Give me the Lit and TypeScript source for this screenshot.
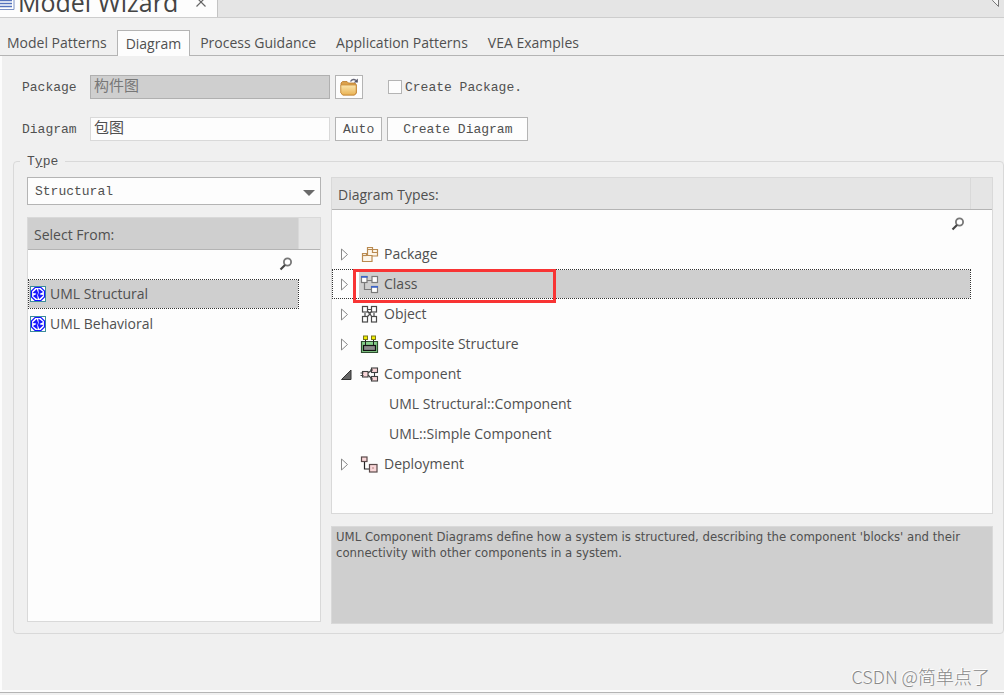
import { LitElement, html, css, svg, nothing } from "lit";
import { customElement, state } from "lit/decorators.js";
import { classMap } from "lit/directives/class-map.js";

const TABS = ["Model Patterns", "Diagram", "Process Guidance", "Application Patterns", "VEA Examples"];

interface TreeNode {
  name: string;
  icon: keyof typeof ICONS;
  children?: string[];
}

const ICONS = {
  package: svg`<g fill="#fdf6ea" stroke="#b98a50" stroke-width="1.2">
    <path d="M7.500 2.500h5v2h5v6.500h-10z"/><path d="M7.500 4.500h5v3h5"/>
    <path d="M2.500 8.500h4v2h5.500v6h-9.500z"/><path d="M2.500 10.500h4"/></g>`,
  class: svg`<g fill="none" stroke="#7a7a7a" stroke-width="1.200">
    <path d="M7 5.500h5M4.500 8v6.500h7"/>
    <rect x="1.500" y="1.500" width="5.500" height="6" fill="#fff"/>
    <rect x="12" y="1.500" width="5.500" height="6" fill="#fff"/>
    <rect x="11.500" y="11.500" width="6" height="6" fill="#fff"/></g>
    <path d="M1 1.800h6.600M11 11.800h7" stroke="#3c64c8" stroke-width="1.800"/>`,
  object: svg`<g fill="#fff" stroke="#4a4a4a" stroke-width="1.200">
    <path d="M7 4.500h5M5 8v4M14 8v4M8 8h3M7 6l3 2 2-2M7 12l3-3 2 3" fill="none"/>
    <rect x="2.500" y="1.500" width="5" height="5.500"/><rect x="11.500" y="1.500" width="5" height="5.500"/>
    <rect x="2.500" y="11.500" width="5" height="5.500"/><rect x="11.500" y="11.500" width="5" height="5.500"/></g>`,
  composite: svg`<path d="M1.500 6.500h16v11h-16z" fill="#86cf8a" stroke="#2f4f30" stroke-width="1.200"/>
    <path d="M5.500 4v6M13.500 4v6" stroke="#222"/>
    <rect x="3.500" y="1" width="4" height="3.500" fill="#f2ee00" stroke="#77751a"/>
    <rect x="11.500" y="1" width="4" height="3.500" fill="#f2ee00" stroke="#77751a"/>
    <rect x="3.500" y="10.500" width="12" height="5" fill="#8b8b8b" stroke="#111" stroke-width="1.200"/>`,
  component: svg`<g fill="#f9d6d8" stroke="#3f3f3f" stroke-width="1.100">
    <path d="M8 8l4-3M8 10l4 4M14.500 8v3" fill="none"/>
    <rect x="2.500" y="6.500" width="5.500" height="5.500"/><rect x="11.500" y="3" width="6" height="4.500"/>
    <rect x="11.500" y="11.500" width="6" height="4.500"/>
    <path d="M.5 8h3M.5 10.500h3M10 5h3M10 14h3"/></g>`,
  deployment: svg`<g fill="#f9d6d8" stroke="#5a4a4a" stroke-width="1.200">
    <path d="M4.500 7v7h5" fill="none" stroke="#222"/>
    <rect x="1.500" y="2" width="5.500" height="4.500"/><rect x="9.500" y="9.500" width="7.500" height="7.500"/></g>
    <path d="M12 13h2" stroke="#b08080"/>`,
};

const TREE: TreeNode[] = [
  { name: "Package", icon: "package" },
  { name: "Class", icon: "class" },
  { name: "Object", icon: "object" },
  { name: "Composite Structure", icon: "composite" },
  { name: "Component", icon: "component", children: ["UML Structural::Component", "UML::Simple Component"] },
  { name: "Deployment", icon: "deployment" },
];

const magnifier = html`<svg class="magnifier" viewBox="0 0 14 14" aria-hidden="true">
  <circle cx="8.500" cy="5" r="3.600" fill="#fff" stroke="#777" stroke-width="1.800"/>
  <path d="M6 8L1.500 12.500" stroke="#444" stroke-width="2.200"/></svg>`;

const umlIcon = html`<svg class="uml" viewBox="0 0 16 16" aria-hidden="true">
  <rect x=".5" y=".5" width="15" height="15" fill="#fff" stroke="#3c8c9c"/>
  <path d="M5 1.500h6L14.500 5v6L11 14.500H5L1.500 11V5z" fill="#fff" stroke="#1414ff" stroke-width="1.200"/>
  <path d="M4 6.500L6.500 4l1 3zM9 3.800l3 2.200-2.600 1.400zM12 9.500L9.500 12l-1-3zM7 12.200L4 10l2.600-1.400z" fill="#1414ff" stroke="#1414ff" stroke-width="1.200"/>
  <path d="M6 7.500l4 1" stroke="#1414ff"/></svg>`;

@customElement("app-root")
export class AppRoot extends LitElement {
  @state() private tab = "Diagram";
  @state() private source = "UML Structural";
  @state() private selected = "Class";
  @state() private open = new Set(["Component"]);

  static styles = css`
    :host {
      --ui: "Open Sans", "Noto Sans", sans-serif;
      --mono: "Liberation Mono", "Noto Sans CJK SC", monospace;
      --line: #b4b4b4;
      --soft: #d9d9d9;
      --grey: #cfcfcf;
      display: flex;
      flex-direction: column;
      min-height: 100vh;
      box-sizing: border-box;
      background: #f0f0f0;
      color: #505050;
      font: 14px/20px var(--ui);
    }
    *, *::before { box-sizing: border-box; }
    button, input, select { font: inherit; color: inherit; margin: 0; border-radius: 0; }
    button { padding: 0; border: 0; background: none; text-align: left; }
    ul { list-style: none; margin: 0; padding: 0; }

    .titlebar {
      display: flex;
      align-items: flex-end;
      justify-content: space-between;
      height: 18px;
      overflow: hidden;
      background: #e5e5e5;
      border-bottom: 1px solid #cdcdcd;
    }
    .doc {
      display: flex;
      align-items: flex-end;
      width: 218px;
      height: 40px;
      flex: none;
      margin-bottom: -1px;
      background: #fdfdfd;
      border-right: 1px solid #c4c4c4;
    }
    .doc-icon { width: 15px; height: 20px; margin-bottom: 8px; }
    .doc h1 { margin: 0 0 0 3px; font: 25px/32px var(--ui); color: #444; white-space: nowrap; }
    .close { margin: 0 0 10px auto; padding-right: 10px; line-height: 0; }
    .close svg { width: 12px; height: 12px; }
    .scroll { width: 10px; height: 20px; margin: 0 4px 10px 0; }

    .tabs {
      display: flex;
      height: 38px;
      padding-top: 12px;
      border-bottom: 1px solid var(--line);
    }
    .tab { height: 26px; padding: 0 9px 1px; white-space: nowrap; border: 1px solid transparent; border-bottom: 0; }
    .tab.active { background: #fdfdfd; border-color: var(--line); padding: 1px 8px 0; }
    .tab:first-child { padding-left: 6px; }

    .page {
      flex: 1;
      display: flex;
      flex-direction: column;
      padding: 19px 0 0 11px;
      border-left: 2px solid #fcfcfc;
      border-bottom: 2px solid #fcfcfc;
    }
    .fields {
      display: grid;
      grid-template-columns: 63px 240px auto;
      grid-auto-rows: 24px;
      column-gap: 5px;
      row-gap: 18px;
      justify-content: start;
      padding-left: 9px;
      font: 13px/26px var(--mono);
    }
    .field {
      height: 24px;
      padding: 0 3px 6px;
      border: 1px solid var(--soft);
      background: #fdfdfd;
      font: 15px/16px "Noto Sans CJK SC", sans-serif;
    }
    .field:disabled { background: var(--grey); border-color: #b0b0b0; color: #777; }
    .actions { display: flex; gap: 5px; }
    .btn {
      height: 24px;
      padding: 2px 15px 0;
      border: 1px solid var(--line);
      background: #fdfdfd;
      text-align: center;
      line-height: 20px;
    }
    .btn.small { padding: 2px 7px 0; }
    .btn.folder { padding: 0 4px; line-height: 0; }
    .btn svg { width: 18px; height: 18px; }
    .check { display: flex; align-items: center; gap: 3px; margin-left: 20px; }
    .check span { padding-top: 2px; }
    .check input {
      appearance: none;
      width: 14px;
      height: 14px;
      border: 1px solid var(--line);
      background: #fdfdfd;
    }
    .check input:checked { background: #555; }

    fieldset {
      margin: 10px 0 0;
      padding: 6px 10px 9px 6px;
      min-width: 0;
      border: 1px solid var(--soft);
      border-radius: 4px;
    }
    legend { padding: 2px 7px 0; font: 13px/18px var(--mono); }
    .columns {
      display: grid;
      grid-template-columns: 294px minmax(0, 1fr);
      gap: 10px;
      margin-left: 7px;
    }
    .column { display: flex; flex-direction: column; gap: 12px; }
    .column:first-child { padding-bottom: 2px; }
    .drop { position: relative; display: flex; }
    .drop select {
      flex: 1;
      height: 28px;
      padding: 2px 7px 0;
      appearance: none;
      border: 1px solid var(--line);
      background: #fdfdfd;
      font: 13px/24px var(--mono);
    }
    .drop svg { position: absolute; right: 6px; top: 13px; width: 12px; height: 6px; pointer-events: none; }

    .panel {
      flex: 1;
      display: flex;
      flex-direction: column;
      border: 1px solid var(--soft);
      background: #fdfdfd;
    }
    .tree { padding-bottom: 34px; }
    .head {
      display: grid;
      grid-template: 31px / 1fr 21px;
      height: 32px;
      border-bottom: 1px solid var(--line);
      background: #e5e5e5;
      line-height: 34px;
    }
    .head h2 { margin: 0; padding-left: 6px; font: inherit; border-right: 1px solid var(--soft); }
    .head.picked h2 { background: var(--grey); }
    .search { display: flex; align-items: center; height: 29px; padding: 0 27px 2px 0; }
    .search input { flex: 1; min-width: 0; height: 24px; border: 0; background: transparent; outline: 0; }
    .magnifier { width: 14px; height: 14px; }

    .row {
      position: relative;
      display: flex;
      align-items: center;
      height: 30px;
      margin-right: 21px;
      border: 1px solid transparent;
    }
    .row.selected { border: 1px dotted #333; }
    .source { width: 100%; height: 28px; display: flex; align-items: center; gap: 4px; padding-left: 1px; }
    .uml { width: 16px; height: 16px; }
    .selected .source, .selected .node { background: var(--grey); }
    .twist { width: 26px; height: 28px; padding-left: 6px; line-height: 0; }
    .twist svg { width: 13px; height: 15px; }
    .node { flex: 1; display: flex; align-items: center; gap: 4px; height: 28px; }
    .node svg { width: 20px; height: 20px; margin: 2px 0 0 1px; }
    .leaf { padding-left: 56px; }
    .mark {
      position: absolute;
      left: 20px;
      top: -1px;
      width: 203px;
      height: 34px;
      border: 3px solid #f83434;
      pointer-events: none;
    }
    .about {
      height: 98px;
      margin: 0;
      padding: 2px 4px;
      border: 1px solid var(--soft);
      background: var(--grey);
      font: 13px/16px "DejaVu Sans Condensed", "DejaVu Sans", sans-serif;
    }
    footer {
      padding: 30px 14px 2px 0;
      text-align: right;
      font: 300 18px/24px "Noto Sans CJK SC", sans-serif;
      color: #8a8a8a;
      text-shadow: -1px -1px 0 #fff;
    }
    .edge { height: 3px; border-top: 1px solid var(--line); background: #f0f0f0; }
  `;

  private toggle(name: string) {
    const next = new Set(this.open);
    next.has(name) ? next.delete(name) : next.add(name);
    this.open = next;
  }

  private renderNode(node: TreeNode) {
    const open = this.open.has(node.name);
    const selected = this.selected === node.name;
    return html`
      <li>
        <div class=${classMap({ row: true, selected })}>
          <button class="twist" aria-label="Expand ${node.name}" aria-expanded=${open} @click=${() => this.toggle(node.name)}>
            <svg viewBox="0 0 13 15" aria-hidden="true">
              ${open
                ? svg`<path d="M12 3v9.500H2.500z" fill="#666" stroke="#333"/>`
                : svg`<path d="M2.500 2l6 5.500-6 5.500z" fill="#fff" stroke="#888"/>`}
            </svg>
          </button>
          <button class="node" @click=${() => (this.selected = node.name)}>
            <svg viewBox="0 0 20 20" aria-hidden="true">${ICONS[node.icon]}</svg>${node.name}
          </button>
          ${node.name === "Class" ? html`<span class="mark"></span>` : nothing}
        </div>
        ${open && node.children
          ? html`<ul>${node.children.map((c) => html`<li class="row"><button class="leaf">${c}</button></li>`)}</ul>`
          : nothing}
      </li>`;
  }

  render() {
    return html`
      <header class="titlebar">
        <div class="doc">
          <svg class="doc-icon" viewBox="0 0 15 20" aria-hidden="true">
            <path d="M-1 0h15v19.500H-1z" fill="#fff" stroke="#7d92c4"/>
            <path d="M0 10.500h12M0 13.500h12M0 16.500h12" stroke="#5573bd" stroke-width="1.500"/>
          </svg>
          <h1>Model Wizard</h1>
          <button class="close" aria-label="Close">
            <svg viewBox="0 0 12 12"><path d="M1.500 1.500l9 9M10.500 1.500l-9 9" stroke="#666" stroke-width="1.200"/></svg>
          </button>
        </div>
        <svg class="scroll" viewBox="0 0 10 20" aria-hidden="true"><path d="M8.500 8v11.500L2.500 13.500z" fill="#f4f4f4" stroke="#777"/></svg>
      </header>
      <nav class="tabs">
        ${TABS.map((t) => html`<button class=${classMap({ tab: true, active: t === this.tab })} @click=${() => (this.tab = t)}>${t}</button>`)}
      </nav>
      <main class="page">
        <div class="fields">
          <label for="pkg">Package</label>
          <input id="pkg" class="field" value="构件图" disabled />
          <div class="actions">
            <button class="btn folder" aria-label="Browse">
              <svg viewBox="0 0 18 18">
                <defs><linearGradient id="f" x2="0" y2="1"><stop offset="0" stop-color="#fbe6ae"/><stop offset="1" stop-color="#e9b254"/></linearGradient></defs>
                <path d="M1 7V5l1.500-1.500H7L8.500 5H15l1.500 2v8l-2 2H3l-2-2z" fill="#dba14c" stroke="#b87a2c" stroke-width=".8"/>
                <path d="M.8 7h15.400v7.500L14.500 17h-12L.8 14.500z" fill="url(#f)" stroke="#c88a38" stroke-width=".8"/>
                <path d="M10.500 3.500C12 1 14.500 1 16 2.600" fill="none" stroke="#667" stroke-width="1.400"/>
                <path d="M17.800.5v4h-4z" fill="#556"/>
              </svg>
            </button>
            <label class="check"><input type="checkbox" /><span>Create Package.</span></label>
          </div>
          <label for="dia">Diagram</label>
          <input id="dia" class="field" value="包图" />
          <div class="actions">
            <button class="btn small">Auto</button>
            <button class="btn">Create Diagram</button>
          </div>
        </div>
        <fieldset>
          <legend>T<u>y</u>pe</legend>
          <div class="columns">
            <div class="column">
              <div class="drop">
                <select aria-label="Type"><option>Structural</option></select>
                <svg viewBox="0 0 12 6" aria-hidden="true"><path d="M0 0h12L6 6z" fill="#6a6a6a"/></svg>
              </div>
              <section class="panel">
                <div class="head picked"><h2>Select From:</h2></div>
                <label class="search"><input aria-label="Filter sources" />${magnifier}</label>
                <ul>
                  ${["UML Structural", "UML Behavioral"].map(
                    (s) => html`<li class=${classMap({ row: true, selected: s === this.source })}>
                      <button class="source" @click=${() => (this.source = s)}>${umlIcon}${s}</button>
                    </li>`
                  )}
                </ul>
              </section>
            </div>
            <div class="column">
              <section class="panel">
                <div class="head"><h2>Diagram Types:</h2></div>
                <label class="search"><input aria-label="Filter diagram types" />${magnifier}</label>
                <ul class="tree">${TREE.map((n) => this.renderNode(n))}</ul>
              </section>
              <p class="about">
                UML Component Diagrams define how a system is structured, describing the component 'blocks' and their
                connectivity with other components in a system.
              </p>
            </div>
          </div>
        </fieldset>
        <footer>CSDN @简单点了</footer>
      </main>
      <div class="edge"></div>
    `;
  }
}
